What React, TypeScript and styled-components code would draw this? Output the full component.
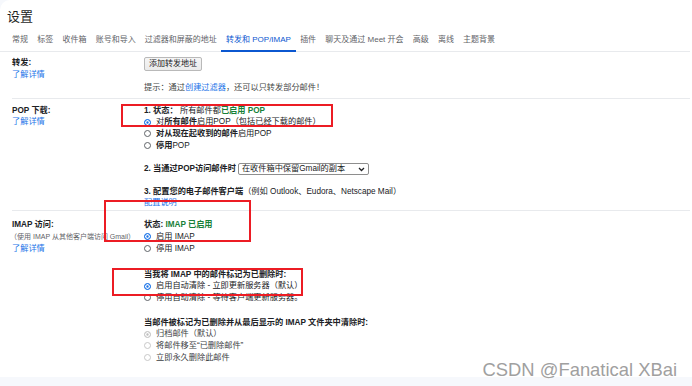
import React from 'react';
import styled, { createGlobalStyle } from 'styled-components';

const GlobalStyle = createGlobalStyle`
  html, body {
    margin: 0;
    padding: 0;
    background: #f6f8fc;
  }
  body {
    font-family: "Liberation Sans", "Noto Sans CJK SC", sans-serif;
    color: #202124;
  }
`;

const TABS = [
   '常规',
   '标签',
   '收件箱',
   '账号和导入',
   '过滤器和屏蔽的地址',
   '转发和 POP/IMAP',
   '插件',
   '聊天及通过 Meet 开会',
   '高级',
   '离线',
   '主题背景',
];

type RadioProps = { checked?: boolean; disabled?: boolean; children: React.ReactNode };

function Radio({ checked, disabled, children }: RadioProps) {
   return (
      <RadioRow $disabled={disabled}>
         <RadioDot $checked={checked} $disabled={disabled} />
         <span>{children}</span>
      </RadioRow>
   );
}

function App() {
   return (
      <Page>
         <GlobalStyle />
         <Card>
            <Title>设置</Title>
            <Tabs>
               {TABS.map((t) => (
                  <Tab key={t} $active={t === '转发和 POP/IMAP'}>
                     {t}
                  </Tab>
               ))}
            </Tabs>

            <Section $pt={5} $pb={4}>
               <LeftCol>
                  <Label>转发:</Label>
                  <Link>了解详情</Link>
               </LeftCol>
               <RightCol>
                  <Button>添加转发地址</Button>
                  <Hint>
                     提示：通过<Link as="span">创建过滤器</Link>，还可以只转发部分邮件！
                  </Hint>
               </RightCol>
            </Section>

            <Section $pt={6} $pb={1.5}>
               <LeftCol>
                  <Label>POP 下载:</Label>
                  <Link>了解详情</Link>
               </LeftCol>
               <RightCol>
                  <Line>
                     <b>1. 状态：</b> 所有邮件都<Green>已启用 POP</Green>
                  </Line>
                  <Radio checked>
                     对<b>所有邮件</b>启用POP（包括已经下载的邮件）
                  </Radio>
                  <Radio>
                     <b>对从现在起收到的邮件</b>启用POP
                  </Radio>
                  <Radio>
                     <b>停用</b>POP
                  </Radio>
                  <SelectLine>
                     <b>2. 当通过POP访问邮件时</b>
                     <Select>
                        <span>在收件箱中保留Gmail的副本</span>
                        <svg width="7" height="5" viewBox="0 0 7 5">
                           <path d="M1 1l2.5 2.5L6 1" fill="none" stroke="#202124" strokeWidth="1.3" />
                        </svg>
                     </Select>
                  </SelectLine>
                  <Line $mt={10}>
                     <b>3. 配置您的电子邮件客户端</b>（例如 Outlook、Eudora、Netscape Mail）
                  </Line>
                  <Link>配置说明</Link>
               </RightCol>
            </Section>

            <Section $pt={8} $pb={0} $last>
               <LeftCol>
                  <Label>IMAP 访问:</Label>
                  <SubNote>（使用 IMAP 从其他客户端访问 Gmail）</SubNote>
                  <Link>了解详情</Link>
               </LeftCol>
               <RightCol>
                  <Line>
                     <b>状态: </b>
                     <Green>IMAP 已启用</Green>
                  </Line>
                  <Radio checked>启用 IMAP</Radio>
                  <Radio>停用 IMAP</Radio>

                  <Line $mt={14}>
                     <b>当我将 IMAP 中的邮件标记为已删除时:</b>
                  </Line>
                  <Radio checked>启用自动清除 - 立即更新服务器（默认）</Radio>
                  <Radio>停用自动清除 - 等待客户端更新服务器。</Radio>

                  <Line $mt={13}>
                     <b>当邮件被标记为已删除并从最后显示的 IMAP 文件夹中清除时:</b>
                  </Line>
                  <Radio checked disabled>
                     归档邮件（默认）
                  </Radio>
                  <Radio disabled>将邮件移至“已删除邮件”</Radio>
                  <Radio disabled>立即永久删除此邮件</Radio>
               </RightCol>
            </Section>

            <Mark style={{ left: 121, top: 104, width: 212, height: 23 }} />
            <Mark style={{ left: 104, top: 200, width: 147, height: 42 }} />
            <Mark style={{ left: 112, top: 268, width: 191, height: 28 }} />
         </Card>
         <Watermark>CSDN @Fanatical XBai</Watermark>
      </Page>
   );
}

export default App;

const Page = styled.div`
   position: relative;
   width: 692px;
   height: 386px;
   overflow: hidden;
`;

const Card = styled.div`
   position: relative;
   height: 377px;
   background: #fff;
   border-radius: 10px 0 0 0;
   font-size: 8.2px;
   line-height: 11.7px;
`;

const Title = styled.div`
   height: 30px;
   box-sizing: border-box;
   padding: 10px 0 0 7px;
   font-size: 13px;
   line-height: 14px;
   color: #1f1f1f;
`;

const Tabs = styled.div`
   display: flex;
   padding-left: 7.5px;
   margin-right: 2px;
   border-bottom: 1px solid #e8eaed;
`;

const Tab = styled.div<{ $active?: boolean }>`
   padding: 3.5px 4.6px 4.5px;
   line-height: 12px;
   font-size: 8px;
   white-space: nowrap;
   color: ${(p) => (p.$active ? '#0b57d0' : '#5f6368')};
   border-bottom: 2px solid ${(p) => (p.$active ? '#0b57d0' : 'transparent')};
   margin-bottom: -1px;
`;

const Section = styled.div<{ $pt: number; $pb: number; $last?: boolean }>`
   display: grid;
   grid-template-columns: 132px 1fr;
   margin: 0 2px 0 12px;
   padding: ${(p) => p.$pt}px 0 ${(p) => p.$pb}px;
   border-bottom: ${(p) => (p.$last ? 'none' : '1px solid #e8eaed')};
`;

const LeftCol = styled.div`
   display: flex;
   flex-direction: column;
   align-items: flex-start;
`;

const RightCol = styled.div`
   display: flex;
   flex-direction: column;
   align-items: flex-start;
`;

const Label = styled.div`
   font-weight: 700;
   color: #202124;
`;

const SubNote = styled.div`
   font-size: 7px;
   color: #5f6368;
   margin-left: -2px;
`;

const Link = styled.a`
   color: #1a73e8;
   cursor: pointer;
`;

const Button = styled.button`
   margin-top: 0;
   height: 14px;
   width: 58px;
   padding: 0;
   font: inherit;
   font-size: 8px;
   line-height: 12px;
   color: #202124;
   background: linear-gradient(#f5f5f5, #ebebeb);
   border: 1px solid #b9b9b9;
   border-radius: 2px;
`;

const Hint = styled.div`
   margin-top: 11px;
   color: #444746;
`;

const Line = styled.div<{ $mt?: number }>`
   margin-top: ${(p) => p.$mt ?? 0}px;
   white-space: nowrap;
`;

const Green = styled.b`
   color: #188038;
`;

const RadioRow = styled.div<{ $disabled?: boolean }>`
   display: flex;
   align-items: center;
   gap: 5px;
   white-space: nowrap;
   color: ${(p) => (p.$disabled ? '#3c4043' : '#202124')};
`;

const RadioDot = styled.span<{ $checked?: boolean; $disabled?: boolean }>`
   width: 7px;
   height: 7px;
   box-sizing: border-box;
   border-radius: 50%;
   border: 1px solid
      ${(p) => (p.$disabled ? '#c8c8c8' : p.$checked ? '#1a73e8' : '#5f6368')};
   background: ${(p) =>
      p.$checked ? (p.$disabled ? '#bdbdbd' : '#1a73e8') : '#fff'};
   box-shadow: ${(p) => (p.$checked ? 'inset 0 0 0 1.3px #fff' : 'none')};
`;

const SelectLine = styled.div`
   display: flex;
   align-items: center;
   gap: 2px;
   margin-top: 11px;
   height: 13px;
   white-space: nowrap;
`;

const Select = styled.div`
   display: flex;
   align-items: center;
   justify-content: space-between;
   width: 131px;
   height: 12px;
   box-sizing: border-box;
   padding: 0 3px 0 3px;
   border: 1px solid #8e8e8e;
   border-radius: 2px;
   line-height: 10px;
`;

const Mark = styled.div`
   position: absolute;
   box-sizing: border-box;
   border: 2px solid #ec1c24;
   pointer-events: none;
`;

const Watermark = styled.div`
   position: absolute;
   right: 15px;
   top: 361px;
   font-family: "Liberation Sans", Arial, sans-serif;
   font-size: 18.4px;
   line-height: 18px;
   color: #a0a0a0;
   text-shadow: 0 0 1px #fff;
   white-space: nowrap;
`;
